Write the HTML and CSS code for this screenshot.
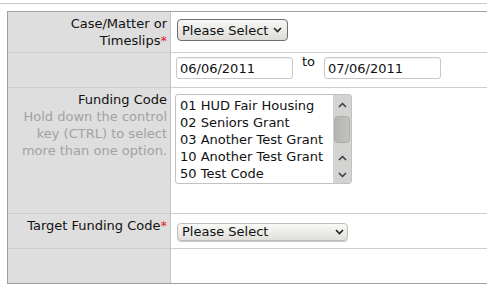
FILE: index.html
```html
<!DOCTYPE html>
<html>
<head>
<meta charset="utf-8">
<title>Funding Code Form</title>
<link rel="stylesheet" href="styles.css">
</head>
<body>
<div class="rule"></div>
<form class="form">
  <div class="label">Case/Matter or<br>Timeslips<span class="req">*</span></div>
  <div class="field row-case">
    <span class="select-wrap">
      <select class="select select-dark"><option>Please Select</option></select>
      <svg class="chev" width="9" height="6" viewBox="0 0 9 6"><polyline points="1,1 4.5,4.5 8,1" fill="none" stroke="#222" stroke-width="1.6"/></svg>
    </span>
  </div>

  <div class="label"></div>
  <div class="field row-dates">
    <input class="date" type="text" value="06/06/2011">
    <span class="to">to</span>
    <input class="date" type="text" value="07/06/2011">
  </div>

  <div class="label">
    <div>Funding Code</div>
    <div class="help">Hold down the control key (CTRL) to select more than one option.</div>
  </div>
  <div class="field row-codes">
    <div class="listbox">
      <div class="options">
        <div>01 HUD Fair Housing</div>
        <div>02 Seniors Grant</div>
        <div>03 Another Test Grant</div>
        <div>10 Another Test Grant</div>
        <div>50 Test Code</div>
      </div>
      <div class="scrollbar">
        <div class="sb-btn"><svg width="9" height="6" viewBox="0 0 9 6"><polyline points="1,5 4.5,1.5 8,5" fill="none" stroke="#3a3a3a" stroke-width="1.5"/></svg></div>
        <div class="sb-track"><div class="sb-thumb"></div></div>
        <div class="sb-btn"><svg width="9" height="6" viewBox="0 0 9 6"><polyline points="1,5 4.5,1.5 8,5" fill="none" stroke="#3a3a3a" stroke-width="1.5"/></svg></div>
        <div class="sb-btn"><svg width="9" height="6" viewBox="0 0 9 6"><polyline points="1,1 4.5,4.5 8,1" fill="none" stroke="#3a3a3a" stroke-width="1.5"/></svg></div>
      </div>
    </div>
  </div>

  <div class="label">Target Funding Code<span class="req">*</span></div>
  <div class="field row-target">
    <span class="select-wrap">
      <select class="select select-light"><option>Please Select</option></select>
      <svg class="chev" width="9" height="6" viewBox="0 0 9 6"><polyline points="1,1 4.5,4.5 8,1" fill="none" stroke="#222" stroke-width="1.6"/></svg>
    </span>
  </div>

  <div class="label last"></div>
  <div class="field last"></div>
</form>
</body>
</html>
```

FILE: styles.css
```css
html, body {
  margin: 0;
  padding: 0;
  overflow: hidden;
  background: #fff;
}

body {
  font-family: "DejaVu Sans", "Liberation Sans", sans-serif;
  font-size: 13px;
  color: #111;
}

.rule {
  margin-top: 3px;
  height: 1px;
  background: #cacaca;
}

.form {
  margin: 7px 0 0 7px;
  border: 1px solid #a0a0a0;
  border-right: none;
  display: grid;
  grid-template-columns: 163px 1fr;
  grid-template-rows: 41px 35px 126px 35px 34px;
}

.label,
.field {
  box-sizing: border-box;
  border-bottom: 1px solid #cdcdcd;
  line-height: 17px;
}

.label {
  background: #dedede;
  border-right: 1px solid #c4c4c4;
  padding: 3px 3px 0 4px;
  text-align: right;
}

.label.last,
.field.last {
  border-bottom: none;
}

.req {
  color: #e0202a;
}

.help {
  color: #a2a2a2;
}

.field {
  background: #fff;
}

.row-case {
  padding: 7px 0 0 6px;
}

.row-dates {
  padding: 0 0 0 5px;
  display: flex;
  align-items: flex-start;
  gap: 9px;
}

.row-codes {
  padding: 6px 0 0 4px;
}

.row-target {
  padding: 9px 0 0 6px;
}

.select-wrap {
  position: relative;
  display: inline-block;
}

.select {
  appearance: none;
  -webkit-appearance: none;
  margin: 0;
  font: inherit;
  color: #111;
  box-sizing: border-box;
  padding: 0 0 0 4px;
  display: block;
}

.select-dark {
  width: 111px;
  height: 22px;
  border: 1px solid #6e6e6e;
  border-radius: 4px;
  background: linear-gradient(#f7f7f5, #dddcd8);
}

.select-light {
  width: 171px;
  height: 18px;
  border: 1px solid #bdbdb8;
  border-radius: 4px;
  background: linear-gradient(#f9f9f7, #e0dfdb);
  box-shadow: 0 1px 0 #c9c9c5;
  line-height: 16px;
}

.chev {
  position: absolute;
  right: 6px;
  top: 50%;
  margin-top: -3px;
  pointer-events: none;
}

.select-light + .chev {
  right: 4px;
}

.date {
  margin: 4px 0 0 0;
  box-sizing: border-box;
  width: 117px;
  height: 22px;
  border: 1px solid #c8c8c8;
  border-radius: 3px;
  padding: 0 3px;
  font: inherit;
  color: #111;
  box-shadow: inset 0 1px 1px rgba(0, 0, 0, 0.06);
}

.to {
  line-height: 17px;
}

.listbox {
  box-sizing: border-box;
  width: 177px;
  height: 90px;
  border: 1px solid #c2c2c2;
  border-radius: 3px;
  background: #fff;
  display: flex;
  overflow: hidden;
}

.options {
  flex: 1;
  padding: 2px 0 0 4px;
  line-height: 17px;
  white-space: nowrap;
}

.scrollbar {
  width: 18px;
  background: #d3d3d1;
  display: flex;
  flex-direction: column;
}

.sb-btn {
  height: 17px;
  display: flex;
  align-items: center;
  justify-content: center;
}

.sb-btn:first-child {
  height: 19px;
}

.sb-track {
  flex: 1;
  padding: 2px 1px 0 1px;
}

.sb-thumb {
  height: 27px;
  border-radius: 4px;
  background: linear-gradient(90deg, #b4b4b2, #c2c2c0);
  border: 1px solid #adadab;
  box-sizing: border-box;
}
```
